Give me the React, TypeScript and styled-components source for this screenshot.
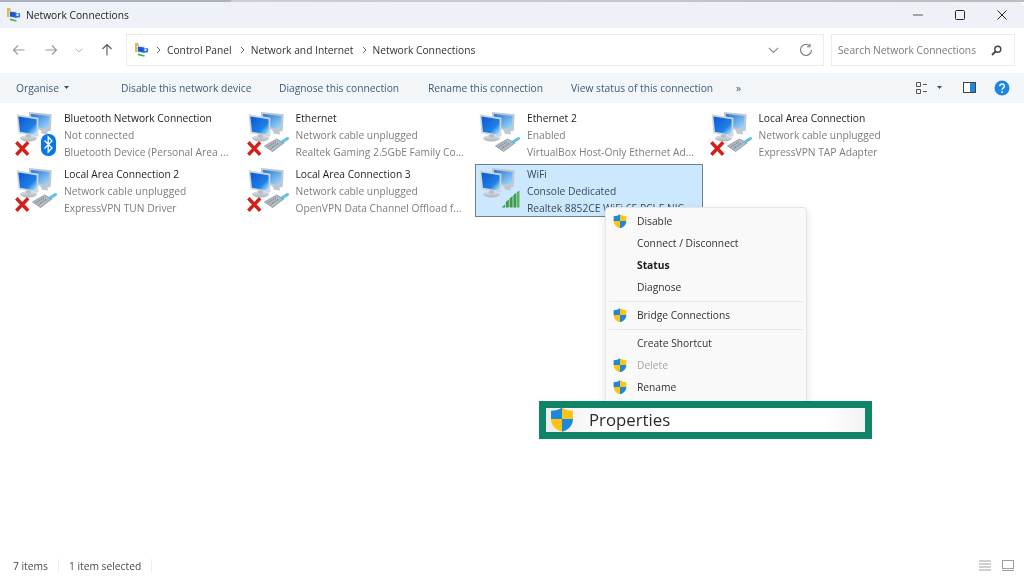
import React from "react";
import styled, { createGlobalStyle } from "styled-components";

const Global = createGlobalStyle`
  html, body { margin: 0; padding: 0; background: #fff; overflow: hidden; }
  * { box-sizing: border-box; }
`;

const FONT = `"Open Sans", "Noto Sans", "Liberation Sans", sans-serif`;
const TEXT_SIZE = "10.25px";

const Window = styled.div`
  position: relative;
  width: 1024px;
  height: 577px;
  display: flex;
  flex-direction: column;
  background: #fff;
  font-family: ${FONT};
  font-size: ${TEXT_SIZE};
  color: #2b2b2b;
  overflow: hidden;
  filter: blur(0.35px);
`;

const TopEdge = styled.div`
  height: 2px;
  flex: none;
  background: linear-gradient(90deg, #a9b2bd 0, #a9b2bd 230px, #cfcfcf 232px, #bcbcbc 1024px);
`;

const TitleBar = styled.div`
  height: 26px;
  flex: none;
  display: flex;
  align-items: center;
  padding: 0 0 1px 6px;
  gap: 6px;
  background: #eef2f8;
  border-top-right-radius: 6px;
`;

const TitleText = styled.span`
  font-size: ${TEXT_SIZE};
  color: #1c1c1c;
`;

const WindowControls = styled.div`
  margin-left: auto;
  display: flex;
  align-items: center;
  gap: 32px;
  padding-right: 17px;
`;

const AddressRow = styled.div`
  height: 45px;
  flex: none;
  display: flex;
  align-items: center;
  background: #fff;
  padding: 0 9px 1px 0;
`;

const NavButtons = styled.div`
  width: 126px;
  flex: none;
  display: flex;
  align-items: center;
  padding-left: 12px;
`;

const NavSlot = styled.span<{ $w: number }>`
  width: ${(p) => p.$w}px;
  flex: none;
  display: flex;
`;

const AddressBox = styled.div`
  width: 698px;
  height: 32px;
  flex: none;
  display: flex;
  align-items: center;
  border: 1px solid #e9ebed;
  padding: 0 0 0 7px;
  color: #333;
`;

const Crumb = styled.span`
  margin-left: 8px;
  display: flex;
  align-items: center;
  gap: 6px;
`;

const AddressTools = styled.div`
  margin-left: auto;
  display: flex;
  align-items: center;
  gap: 20px;
  padding-right: 10px;
`;

const SearchBox = styled.div`
  width: 184px;
  height: 32px;
  margin-left: 7px;
  flex: none;
  display: flex;
  align-items: center;
  justify-content: space-between;
  border: 1px solid #e9ebed;
  padding: 0 12px 0 6px;
  color: #7b7b7b;
`;

const CommandBar = styled.div`
  height: 30px;
  flex: none;
  display: flex;
  align-items: center;
  background: #f3f6f9;
  padding: 0 14px 1px 16px;
  color: #3d5a78;
`;

const OrganiseButton = styled.span`
  display: flex;
  align-items: center;
  gap: 5px;
  width: 105px;
`;

const CommandLink = styled.span<{ $w: number }>`
  width: ${(p) => p.$w}px;
  flex: none;
`;

const CommandRight = styled.div`
  margin-left: auto;
  display: flex;
  align-items: center;
`;

const Content = styled.div`
  flex: 1;
  min-height: 0;
  display: grid;
  grid-template-columns: repeat(4, 228px);
  grid-auto-rows: 56px;
  column-gap: 3.5px;
  padding: 5px 0 0 12px;
  align-content: start;
`;

const Item = styled.div<{ $selected?: boolean }>`
  height: 53px;
  display: flex;
  padding: 1px 0 0 2px;
  border: 1px solid ${(p) => (p.$selected ? "#6f7f8e" : "transparent")};
  background: ${(p) => (p.$selected ? "#cce8ff" : "transparent")};
`;

const IconBox = styled.div`
  width: 42px;
  height: 44px;
  flex: none;
  margin-top: 2px;
`;

const ItemText = styled.div`
  margin-left: 7px;
  min-width: 0;
  display: flex;
  flex-direction: column;
`;

const ItemLine = styled.div<{ $muted?: boolean; $sel?: boolean }>`
  height: 17px;
  line-height: 17px;
  white-space: nowrap;
  color: ${(p) => (p.$sel ? "#3c4a56" : p.$muted ? "#7d7d7d" : "#1f1f1f")};
`;

const StatusBar = styled.div`
  height: 22px;
  flex: none;
  display: flex;
  align-items: center;
  padding: 0 10px 1px 13px;
  color: #4a4a4a;
`;

const StatusCell = styled.span`
  padding-right: 10px;
  margin-right: 10px;
  border-right: 1px solid #eeeeee;
`;

const StatusIcons = styled.div`
  margin-left: auto;
  display: flex;
  align-items: center;
  gap: 11px;
`;

const Menu = styled.div`
  position: absolute;
  left: 605px;
  top: 207px;
  width: 202px;
  height: 200px;
  background: #f9f9f9;
  border: 1px solid #e6e6e6;
  border-radius: 4px;
  box-shadow: 0 3px 8px rgba(0, 0, 0, 0.12);
  padding-top: 2px;
`;

const MenuRow = styled.div<{ $bold?: boolean; $off?: boolean }>`
  height: 22px;
  display: flex;
  align-items: center;
  font-weight: ${(p) => (p.$bold ? 700 : 400)};
  color: ${(p) => (p.$off ? "#a6a6a6" : p.$bold ? "#1a1a1a" : "#333")};
`;

const MenuIcon = styled.span`
  width: 31px;
  flex: none;
  display: flex;
  padding-left: 7px;
`;

const MenuSep = styled.div`
  height: 1px;
  margin: 2.5px 3px;
  background: #e8e8e8;
`;

const Highlight = styled.div`
  position: absolute;
  left: 539px;
  top: 401px;
  width: 333px;
  height: 38px;
  border: 7px solid #0f8466;
  display: flex;
  align-items: center;
  background: linear-gradient(90deg, #ececec, #fff 18%, #fff 88%, #f2f2f2);
  font-size: 16.8px;
  color: #2a2a2a;
  padding: 0 0 1px 4px;
  gap: 15px;
`;

type Badge = "bt" | "xcable" | "cable" | "signal";

const NetIcon: React.FC<{ badge: Badge; id: string }> = ({ badge, id }) => (
  <svg width="42" height="44" viewBox="0 0 42 44">
    <defs>
      <linearGradient id={`f${id}`} x1="0" y1="0" x2="1" y2="1">
        <stop offset="0" stopColor="#0b58d2" />
        <stop offset="0.65" stopColor="#1f7fe6" />
        <stop offset="0.9" stopColor="#8ed2f6" />
        <stop offset="1" stopColor="#d8f1fc" />
      </linearGradient>
      <linearGradient id={`b${id}`} x1="0" y1="0" x2="1" y2="1">
        <stop offset="0" stopColor="#1f74dc" />
        <stop offset="1" stopColor="#a9dcf8" />
      </linearGradient>
      <linearGradient id={`s${id}`} x1="0" y1="0" x2="0" y2="1">
        <stop offset="0" stopColor="#e2e6ea" />
        <stop offset="1" stopColor="#a9b1b8" />
      </linearGradient>
    </defs>
    <path d="M14 0l22.700 2.300-1 16.700-3.300.5.700 3-6-.8-2-4-11-2z" fill="#bfc8d0" />
    <path d="M16 2l18.500 2-.8 13-17.700-3z" fill={`url(#b${id})`} />
    <path d="M1.700 2.300l21.600 3.400v19L3.300 21.300z" fill="#cfd6dc" />
    <path d="M3.400 4.500l18.200 2.800v15.400L5 19.800z" fill={`url(#f${id})`} />
    <ellipse cx="13.500" cy="26.300" rx="8.500" ry="3.200" fill={`url(#s${id})`} />
    <path d="M11 22.500h5v3h-5z" fill="#b7bec5" />
    {(badge === "xcable" || badge === "bt") && (
      <path d="M2.500 31.500l9.500 10M12 31.500l-9.500 10" stroke="#d3201b" strokeWidth="3.400" strokeLinecap="square" />
    )}
    {badge === "bt" && (
      <g>
        <rect x="26" y="22" width="15" height="22" rx="7" fill="#0a78e4" />
        <path d="M29.500 28.500l7.500 7.500-3.800 4V25l3.800 4-7.500 7.500" fill="none" stroke="#fff" strokeWidth="1.300" />
      </g>
    )}
    {(badge === "xcable" || badge === "cable") && (
      <g>
        <path d="M17.500 34l12-7 7.500 4-11.500 8.500z" fill="#b1bbc4" stroke="#87939e" strokeWidth=".8" />
        <path d="M21 34.500l8.500-5M23.500 36.500l8.500-5.500" stroke="#6f7b86" strokeWidth="1.300" strokeDasharray="1 1" />
        <path d="M35 30l5.500-3.500" stroke="#63bfe6" strokeWidth="3" strokeLinecap="round" />
      </g>
    )}
    {badge === "signal" && (
      <g fill="#3e9b45">
        <path d="M24 39l3-2.500V39.500h-3z" />
        <path d="M27.800 39.500v-5.500l3-2.500v8z" />
        <path d="M31.600 39.500v-9l3-2.500v11.500z" />
        <path d="M35.400 39.500V27.200l3-2.700v15z" />
        <path d="M39 39.500V24l2.500-1.500v17z" fill="#5ab35e" />
      </g>
    )}
  </svg>
);

const SmallNet: React.FC = () => (
  <svg width="14" height="14" viewBox="0 0 14 14" style={{ flex: "none" }}>
    <path d="M1 0h3l1 2v7H1z" fill="#e0b84e" />
    <path d="M3 2.500l8 1v7l-8-1.200z" fill="#d5dbe1" />
    <path d="M4 3.800l6 .8v4.800l-6-1z" fill="#1a58cc" />
    <path d="M9 5.500l5-.3v4l-5 .5z" fill="#1f6fdc" />
    <path d="M10.500 6l2 0v2h-2z" fill="#e8f2fb" />
    <path d="M4 11.300l6.500 1.700" stroke="#42b35c" strokeWidth="1.800" />
  </svg>
);

const Shield: React.FC<{ size?: number }> = ({ size = 14 }) => (
  <svg width={size} height={size * 1.05} viewBox="0 0 14 14.700" style={{ flex: "none" }}>
    <path d="M7 .3C5.300 1.600 3 2.200.6 2.200V7H7z" fill="#1e88d8" />
    <path d="M7 .3c1.700 1.300 4 1.900 6.400 1.900V7H7z" fill="#fcc419" />
    <path d="M.6 7c0 3.900 2.800 6.300 6.400 7.500V7z" fill="#fcc419" />
    <path d="M13.400 7c0 3.900-2.800 6.300-6.400 7.500V7z" fill="#1e88d8" />
  </svg>
);

const Arrow: React.FC<{ dir: "l" | "r" | "u"; color: string }> = ({ dir, color }) => {
  const r = dir === "l" ? 180 : dir === "u" ? -90 : 0;
  return (
    <svg width="14" height="14" viewBox="0 0 14 14" style={{ transform: `rotate(${r}deg)` }}>
      <path d="M1.500 7h11M8 2.500L12.500 7 8 11.500" fill="none" stroke={color} strokeWidth="1.100" />
    </svg>
  );
};

const Chev: React.FC<{ size?: number; color?: string }> = ({ size = 10, color = "#8a8a8a" }) => (
  <svg width={size} height={size * 0.6} viewBox="0 0 10 6">
    <path d="M.8.8L5 5l4.200-4.200" fill="none" stroke={color} strokeWidth="1" />
  </svg>
);

const Sep: React.FC = () => (
  <svg width="5" height="8" viewBox="0 0 5 8">
    <path d="M1 1l3 3-3 3" fill="none" stroke="#666" strokeWidth="1" />
  </svg>
);

const Caret: React.FC = () => (
  <svg width="5" height="3" viewBox="0 0 5 3">
    <path d="M0 0h5L2.500 3z" fill="#33506c" />
  </svg>
);

const items: { name: string; status: string; dev: string; badge: Badge; selected?: boolean }[] = [
  { name: "Bluetooth Network Connection", status: "Not connected", dev: "Bluetooth Device (Personal Area ...", badge: "bt" },
  { name: "Ethernet", status: "Network cable unplugged", dev: "Realtek Gaming 2.5GbE Family Co...", badge: "xcable" },
  { name: "Ethernet 2", status: "Enabled", dev: "VirtualBox Host-Only Ethernet Ad...", badge: "cable" },
  { name: "Local Area Connection", status: "Network cable unplugged", dev: "ExpressVPN TAP Adapter", badge: "xcable" },
  { name: "Local Area Connection 2", status: "Network cable unplugged", dev: "ExpressVPN TUN Driver", badge: "xcable" },
  { name: "Local Area Connection 3", status: "Network cable unplugged", dev: "OpenVPN Data Channel Offload f...", badge: "xcable" },
  { name: "WiFi", status: "Console Dedicated", dev: "Realtek 8852CE WiFi 6E PCI-E NIC", badge: "signal", selected: true },
];

export default function App() {
  return (
    <>
      <Global />
      <Window>
        <TopEdge />
        <TitleBar>
          <SmallNet />
          <TitleText>Network Connections</TitleText>
          <WindowControls>
            <svg width="10" height="10" viewBox="0 0 10 10"><path d="M0 5h10" stroke="#555" strokeWidth="1" /></svg>
            <svg width="10" height="10" viewBox="0 0 10 10"><rect x=".5" y=".5" width="9" height="9" rx="1" fill="none" stroke="#222" strokeWidth="1" /></svg>
            <svg width="10" height="10" viewBox="0 0 10 10"><path d="M.5.5l9 9M9.500.5l-9 9" stroke="#222" strokeWidth="1" /></svg>
          </WindowControls>
        </TitleBar>
        <AddressRow>
          <NavButtons>
            <NavSlot $w={32}><Arrow dir="l" color="#9a9a9a" /></NavSlot>
            <NavSlot $w={31}><Arrow dir="r" color="#9a9a9a" /></NavSlot>
            <NavSlot $w={25}><Chev size={8} color="#a0a0a0" /></NavSlot>
            <NavSlot $w={20}><Arrow dir="u" color="#555" /></NavSlot>
          </NavButtons>
          <AddressBox>
            <SmallNet />
            <Crumb><Sep />Control Panel</Crumb>
            <Crumb><Sep />Network and Internet</Crumb>
            <Crumb><Sep />Network Connections</Crumb>
            <AddressTools>
              <Chev size={11} />
              <svg width="14" height="14" viewBox="0 0 14 14">
                <path d="M12.500 7A5.500 5.500 0 1 1 10.500 2.700" fill="none" stroke="#777" strokeWidth="1.100" />
                <path d="M11 .8v3h-3" fill="none" stroke="#777" strokeWidth="1.100" />
              </svg>
            </AddressTools>
          </AddressBox>
          <SearchBox>
            <span>Search Network Connections</span>
            <svg width="11" height="11" viewBox="0 0 11 11">
              <circle cx="6.800" cy="4.200" r="3" fill="none" stroke="#444" strokeWidth="1.400" />
              <path d="M4.500 6.500L1 10" stroke="#444" strokeWidth="1.800" />
            </svg>
          </SearchBox>
        </AddressRow>
        <CommandBar>
          <OrganiseButton>Organise <Caret /></OrganiseButton>
          <CommandLink $w={158}>Disable this network device</CommandLink>
          <CommandLink $w={149}>Diagnose this connection</CommandLink>
          <CommandLink $w={143}>Rename this connection</CommandLink>
          <CommandLink $w={165}>View status of this connection</CommandLink>
          <span>»</span>
          <CommandRight>
            <svg width="12" height="12" viewBox="0 0 12 12" style={{ marginRight: 9 }}>
              <path d="M.5.5h4v4h-4zM.5 7.500h4v4h-4z" fill="none" stroke="#555" />
              <path d="M7 2.500h4M7 9.500h4" stroke="#555" />
            </svg>
            <Caret />
            <svg width="13" height="11" viewBox="0 0 13 11" style={{ marginLeft: 21, marginRight: 18 }}>
              <rect x=".5" y=".5" width="12" height="10" fill="#fff" stroke="#444" />
              <rect x="7" y="1" width="5" height="9" fill="#1e88d8" />
            </svg>
            <svg width="16" height="16" viewBox="0 0 16 16">
              <circle cx="8" cy="8" r="7.500" fill="#1c86e0" />
              <path d="M5.800 6.200c0-3 4.600-3 4.600-.1 0 1.800-2.300 1.800-2.300 3.700" fill="none" stroke="#fff" strokeWidth="1.400" />
              <circle cx="8.100" cy="12" r=".9" fill="#fff" />
            </svg>
          </CommandRight>
        </CommandBar>
        <Content>
          {items.map((it, i) => (
            <Item key={it.name} $selected={it.selected}>
              <IconBox><NetIcon badge={it.badge} id={String(i)} /></IconBox>
              <ItemText>
                <ItemLine $sel={it.selected}>{it.name}</ItemLine>
                <ItemLine $muted $sel={it.selected}>{it.status}</ItemLine>
                <ItemLine $muted $sel={it.selected}>{it.dev}</ItemLine>
              </ItemText>
            </Item>
          ))}
        </Content>
        <StatusBar>
          <StatusCell>7 items</StatusCell>
          <StatusCell>1 item selected</StatusCell>
          <StatusIcons>
            <svg width="12" height="11" viewBox="0 0 12 11"><path d="M0 1h12M0 4h12M0 7h12M0 10h12" stroke="#a0a0a0" strokeWidth="1" /></svg>
            <svg width="12" height="11" viewBox="0 0 12 11"><rect x=".5" y=".5" width="11" height="8" fill="none" stroke="#a0a0a0" /><path d="M0 10.500h12" stroke="#a0a0a0" /></svg>
          </StatusIcons>
        </StatusBar>
        <Menu>
          <MenuRow><MenuIcon><Shield /></MenuIcon>Disable</MenuRow>
          <MenuRow><MenuIcon />Connect / Disconnect</MenuRow>
          <MenuRow $bold><MenuIcon />Status</MenuRow>
          <MenuRow><MenuIcon />Diagnose</MenuRow>
          <MenuSep />
          <MenuRow><MenuIcon><Shield /></MenuIcon>Bridge Connections</MenuRow>
          <MenuSep />
          <MenuRow><MenuIcon />Create Shortcut</MenuRow>
          <MenuRow $off><MenuIcon><Shield /></MenuIcon>Delete</MenuRow>
          <MenuRow><MenuIcon><Shield /></MenuIcon>Rename</MenuRow>
        </Menu>
        <Highlight>
          <Shield size={24} />
          <span>Properties</span>
        </Highlight>
      </Window>
    </>
  );
}
